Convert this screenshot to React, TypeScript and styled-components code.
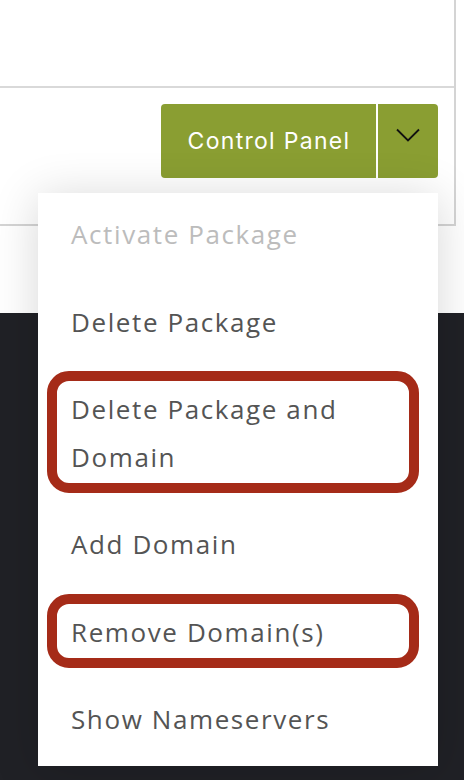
import React from 'react';
import styled, { createGlobalStyle } from 'styled-components';

const GlobalStyle = createGlobalStyle`
  html, body {
    margin: 0;
    padding: 0;
    background: #ffffff;
  }
  body {
    width: 464px;
    height: 780px;
    overflow: hidden;
  }
`;

const Page = styled.div`
  display: flex;
  flex-direction: column;
  height: 780px;
  background: #ffffff;
`;

const Card = styled.div`
  width: 454px;
  border-right: 2px solid #d4d4d4;
  border-bottom: 2px solid #d4d4d4;
  background: #ffffff;
`;

const CardTop = styled.div`
  height: 86px;
  border-bottom: 2px solid #d9d9d9;
`;

const CardFooter = styled.div`
  height: 136px;
  display: flex;
  justify-content: flex-end;
  align-items: flex-start;
  padding: 16px 16px 0 0;
  box-sizing: border-box;
`;

const SplitButton = styled.div`
  position: relative;
  display: flex;
  height: 74px;
`;

const MainButton = styled.button`
  height: 100%;
  width: 215px;
  border: none;
  border-radius: 4px 0 0 4px;
  background: #8a9e32;
  color: #ffffff;
  font-family: 'Inter', 'Open Sans', sans-serif;
  font-size: 23px;
  letter-spacing: 1.3px;
  font-weight: 400;
  padding: 0 0 0 1px;
  cursor: pointer;
`;

const CaretButton = styled.button`
  height: 100%;
  width: 60px;
  margin-left: 2px;
  border: none;
  border-radius: 0 4px 4px 0;
  background: #8a9e32;
  display: flex;
  justify-content: center;
  align-items: flex-start;
  padding: 24px 0 0;
  cursor: pointer;
`;

const Menu = styled.ul`
  position: absolute;
  top: 89px;
  right: 0;
  width: 400px;
  margin: 0;
  padding: 0;
  list-style: none;
  background: #ffffff;
  box-shadow: 0 4px 44px rgba(0, 0, 0, 0.16);
  z-index: 5;
`;

const MenuItem = styled.li<{ $disabled?: boolean }>`
  position: relative;
  padding: 18px 33px 22px 33px;
  font-family: 'Open Sans', sans-serif;
  font-size: 26px;
  letter-spacing: 1.6px;
  line-height: 47.5px;
  color: ${p => (p.$disabled ? '#bcbcbc' : '#545454')};
`;

const Highlight = styled.span`
  position: absolute;
  top: 3px;
  bottom: 10px;
  left: 9px;
  right: 19px;
  border: 10px solid #a52b18;
  border-radius: 22px;
  pointer-events: none;
`;

const Spacer = styled.div`
  height: 87px;
`;

const Footer = styled.div`
  flex: 1;
  background: #202126;
`;

const items: { label: string; disabled?: boolean; marked?: boolean }[] = [
  { label: 'Activate Package', disabled: true },
  { label: 'Delete Package' },
  { label: 'Delete Package and Domain', marked: true },
  { label: 'Add Domain' },
  { label: 'Remove Domain(s)', marked: true },
  { label: 'Show Nameservers' },
];

export default function App() {
  return (
    <Page>
      <GlobalStyle />
      <Card>
        <CardTop />
        <CardFooter>
          <SplitButton>
            <MainButton>Control Panel</MainButton>
            <CaretButton aria-label="More actions">
              <svg width="24" height="14" viewBox="0 0 24 14" fill="none">
                <path d="M1 1.5 L12 12.5 L23 1.5" stroke="#111" strokeWidth="1.8" />
              </svg>
            </CaretButton>
            <Menu>
              {items.map(item => (
                <MenuItem key={item.label} $disabled={item.disabled}>
                  {item.label}
                  {item.marked && <Highlight />}
                </MenuItem>
              ))}
            </Menu>
          </SplitButton>
        </CardFooter>
      </Card>
      <Spacer />
      <Footer />
    </Page>
  );
}
